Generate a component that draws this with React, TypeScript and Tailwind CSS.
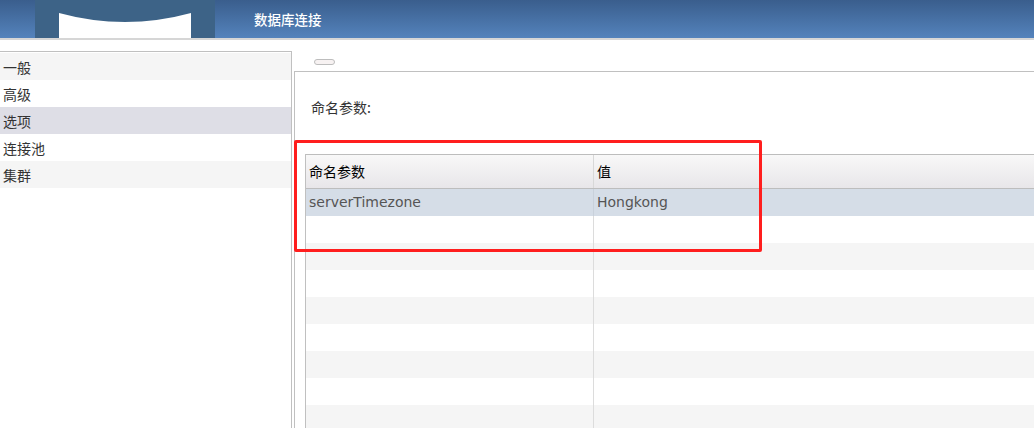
import React from 'react';

const navItems = [
  { label: '一般', bg: 'bg-[#f5f5f5]' },
  { label: '高级', bg: 'bg-white' },
  { label: '选项', bg: 'bg-[#dedee6]' },
  { label: '连接池', bg: 'bg-white' },
  { label: '集群', bg: 'bg-[#f5f5f5]' },
];

// empty striped rows below the single parameter row
const emptyRows = [0, 1, 2, 3, 4, 5, 6, 7];

export default function App() {
  return (
    <div
      className="w-[1034px] h-[428px] overflow-hidden bg-white text-[14px] flex flex-col"
      style={{ fontFamily: '"DejaVu Sans", "Noto Sans CJK SC", sans-serif' }}
    >
      {/* Header */}
      <div className="h-[38px] shrink-0 flex bg-gradient-to-b from-[#3a5e8d] to-[#5483bc]">
        <div className="ml-[35px] w-[180px] h-full bg-[#3d6387] flex items-end justify-center">
          <svg width="132" height="25" viewBox="0 0 132 25" className="block">
            <path d="M0 0 Q66 18 132 0 L132 25 L0 25 Z" fill="#ffffff" />
          </svg>
        </div>
        <div
          className="ml-[39px] flex items-center text-white font-medium text-[13.5px]"
          style={{ fontFamily: '"Noto Sans CJK SC", sans-serif' }}
        >
          数据库连接
        </div>
      </div>
      <div className="h-[2px] shrink-0 bg-[#d6d6d6]" />

      {/* Body */}
      <div className="flex flex-1 mt-[11px] min-h-0">
        {/* Left nav */}
        <div
          className="w-[292px] shrink-0 border-t border-r border-[#c0c0c0] pt-[1px]"
          style={{ fontFamily: '"Noto Sans CJK SC", sans-serif' }}
        >
          {navItems.map((item) => (
            <div key={item.label} className={`h-[27px] flex items-center pl-[3px] pt-[2px] text-[#333] ${item.bg}`}>
              {item.label}
            </div>
          ))}
        </div>

        {/* Right side */}
        <div className="relative flex-1 ml-[2px] flex flex-col min-w-0">
          <div className="h-[20px] shrink-0 flex items-center pl-[20px] pt-[2px]">
            <div className="w-[21px] h-[6px] rounded-full border border-[#bdbdbd] bg-[#f7f2f2]" />
          </div>
          <div className="flex-1 border-l border-t border-[#c0c0c0] pl-[10px]">
            <div
              className="h-[68px] flex items-center pl-[6px] pt-[2px] text-[#333]"
              style={{ fontFamily: '"Noto Sans CJK SC", sans-serif' }}
            >
              命名参数:
            </div>
            <div className="mt-[14px] border-l border-[#c0c0c0]">
              {/* Table header */}
              <div className="h-[35px] flex border-t border-b border-[#bdbdbd] bg-gradient-to-b from-[#f8f8f8] to-[#e8e6e9]">
                <div
                  className="w-[288px] shrink-0 border-r border-[#d8d8d8] flex items-center pl-[3px] text-black"
                  style={{ fontFamily: '"Noto Sans CJK SC", sans-serif' }}
                >
                  命名参数
                </div>
                <div
                  className="flex-1 flex items-center pl-[3px] text-black"
                  style={{ fontFamily: '"Noto Sans CJK SC", sans-serif' }}
                >
                  值
                </div>
              </div>
              {/* Data row */}
              <div className="h-[27px] flex bg-[#d5dde7] text-[#555]">
                <div className="w-[288px] shrink-0 border-r border-[#c9d1db] flex items-center pl-[3px]">serverTimezone</div>
                <div className="flex-1 flex items-center pl-[3px]">Hongkong</div>
              </div>
              {emptyRows.map((i) => (
                <div key={i} className={`h-[27px] flex ${i % 2 === 0 ? 'bg-white' : 'bg-[#f5f5f5]'}`}>
                  <div className="w-[288px] shrink-0 border-r border-[#dcdcdc]" />
                  <div className="flex-1" />
                </div>
              ))}
            </div>
          </div>

          {/* Red annotation box */}
          <div className="absolute left-0 top-[89px] w-[468px] h-[112px] border-[3px] border-[#ff1e1e] rounded-[2px] pointer-events-none" />
        </div>
      </div>
    </div>
  );
}
